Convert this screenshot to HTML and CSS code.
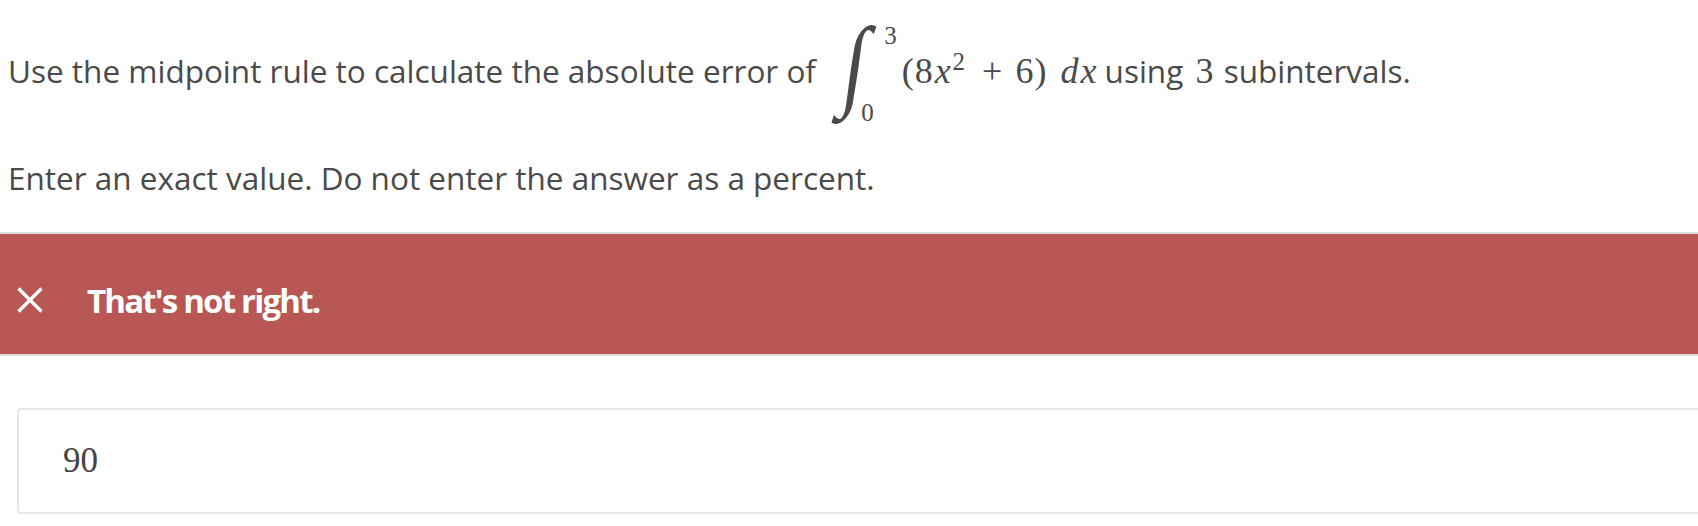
FILE: index.html
```html
<!DOCTYPE html>
<html>
<head>
<meta charset="utf-8">
<link rel="stylesheet" href="styles.css">
</head>
<body>
<div class="question">
  <p class="q1">Use the midpoint rule to calculate the absolute error of <span class="int"><span class="int-sign">∫</span><span class="lim-up">3</span><span class="lim-lo">0</span></span><span class="expr"><span class="m-lp">(</span><span class="m-8">8</span><i class="m-x1">x</i><sup class="m-sup">2</sup><span class="m-plus">+</span><span class="m-6">6</span><span class="m-rp">)</span><i class="m-d">d</i><i class="m-x2">x</i></span> using <span class="num">3</span> subintervals.</p>
  <p class="q2">Enter an exact value. Do not enter the answer as a percent.</p>
</div>
<div class="feedback">
  <svg class="x-icon" viewBox="0 0 26 26" width="26" height="26"><path d="M1.5 1.5 L24.5 24.5 M24.5 1.5 L1.5 24.5" stroke="#fff" stroke-width="3.2" fill="none"/></svg>
  <span class="fb-text">That's not right.</span>
</div>
<div class="answer-wrap">
  <div class="answer"><span class="answer-val">90</span></div>
</div>
</body>
</html>
```
FILE: styles.css
```css
html, body {
  margin: 0;
  padding: 0;
  background: #fff;
  overflow: hidden;
}
body {
  font-family: "Open Sans", sans-serif;
  color: #4a4a4a;
  width: 1698px;
}
.question {
  padding: 0 8px;
}
.q1 {
  margin: 0;
  padding-top: 6px;
  font-size: 31.5px;
  line-height: 130px;
  height: 130px;
  white-space: nowrap;
}
.int {
  display: inline-grid;
  grid-template-columns: 52px auto;
  grid-template-rows: 48px 48px;
  height: 96px;
  vertical-align: middle;
  margin-left: 8px;
  font-family: "Liberation Serif", serif;
  line-height: normal;
}
.int-sign {
  grid-row: 1 / 3;
  grid-column: 1;
  align-self: start;
  font-size: 101px;
  line-height: 73px;
  height: 96px;
  text-align: center;
  transform: translateX(-4px) skewX(-8deg) scaleX(0.82);
}
.lim-up {
  grid-row: 1;
  grid-column: 2;
  align-self: start;
  font-size: 25px;
  line-height: 25px;
  margin-top: -4px;
}
.lim-lo {
  grid-row: 2;
  grid-column: 2;
  align-self: end;
  font-size: 25px;
  line-height: 25px;
  margin-left: -23px;
  margin-bottom: -2px;
}
.expr, .num {
  font-family: "Liberation Serif", serif;
  font-size: 36px;
}
.expr {
  margin-left: 5px;
}
.expr i {
  font-style: italic;
}
.m-8 { margin-left: 1px; }
.m-x1 { margin-left: 2px; }
.m-sup {
  font-size: 25px;
  line-height: 0;
  vertical-align: 13px;
  margin-left: 2px;
}
.m-plus { margin-left: 17px; }
.m-6 { margin-left: 13px; }
.m-rp { margin-left: 1px; }
.m-d { margin-left: 14px; }
.m-x2 { margin-left: 2px; }
.num {
  margin: 0 2px 0 4px;
}
.q2 {
  margin: 20px 0 0 0;
  font-size: 31.5px;
  line-height: 1.4;
}
.feedback {
  margin-top: 32px;
  box-sizing: border-box;
  height: 124px;
  background: #b95755;
  border-top: 2px solid #dcdcdc;
  border-bottom: 2px solid #dcdcdc;
  display: flex;
  align-items: center;
  padding: 12px 0 0 17px;
  color: #fff;
}
.x-icon {
  display: block;
  flex: none;
}
.fb-text {
  margin-left: 44px;
  font-weight: 700;
  font-size: 33px;
  letter-spacing: -1.8px;
}
.answer-wrap {
  padding: 52px 0 0 17px;
}
.answer {
  width: 1720px;
  height: 102px;
  border: 2px solid #e6e6e6;
  border-radius: 4px;
  display: flex;
  align-items: center;
  padding-left: 44px;
  box-sizing: content-box;
}
.answer-val {
  font-family: "Liberation Serif", serif;
  font-size: 35px;
  color: #444;
}
```
